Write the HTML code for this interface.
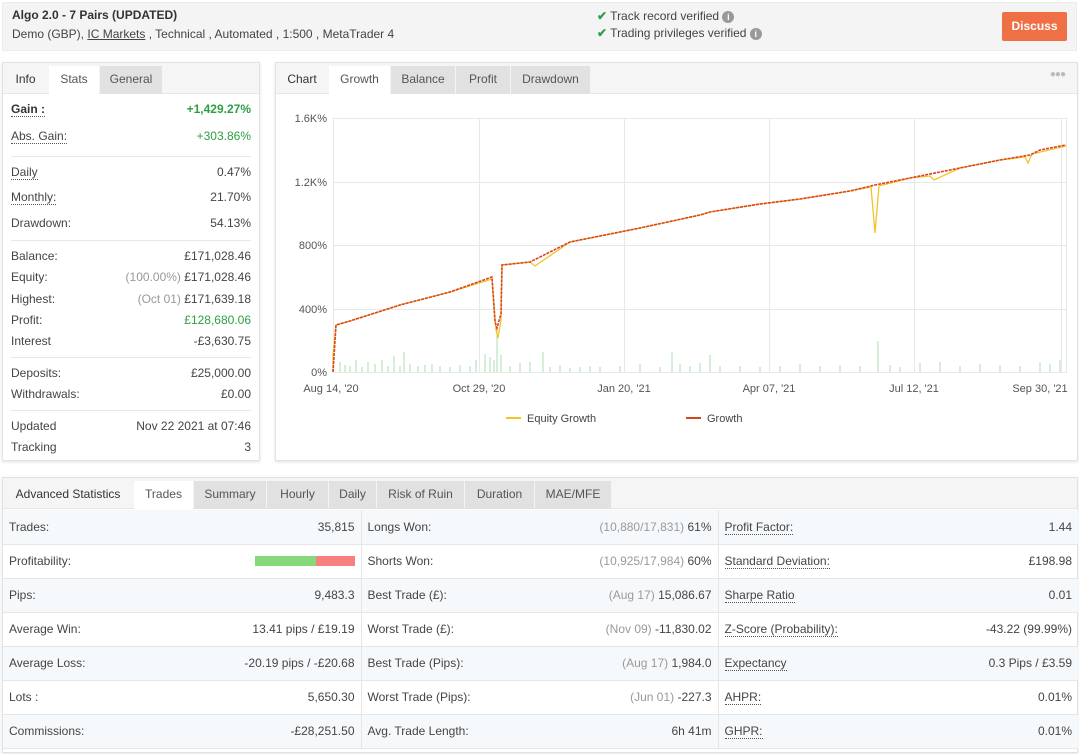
<!DOCTYPE html>
<html><head><style>
*{box-sizing:border-box;margin:0;padding:0}
body{width:1079px;height:754px;background:#fff;font-family:"Liberation Sans",sans-serif;font-size:12px;color:#444;position:relative;overflow:hidden}
.abs{position:absolute}
.box{position:absolute;border:1px solid #e3e3e3;background:#fff;box-shadow:0 1px 3px rgba(0,0,0,.12)}
.tabs{position:absolute;left:0;right:0;top:0;height:31px;background:#f5f5f5;border-bottom:1px solid #e6e6e6}
.tab{position:absolute;top:3px;height:28px;line-height:26px;text-align:center;background:#e1e1e1;color:#555}
.tab.on{background:#fff}
.tab.t{background:none;color:#333}
.row{position:absolute;left:8px;right:8px;height:21px;line-height:21px}
.row .r{position:absolute;right:0;top:0}
.u{border-bottom:1px dotted #555}
.g{color:#2e9e45}
.gr{color:#999}
.sep{position:absolute;left:8px;right:8px;height:1px;background:#e8e8e8}
table{border-collapse:collapse;position:absolute;left:0;top:32px;width:1075px}
td{height:34px;border-bottom:1px solid #e6e6e6;padding:0 6px;white-space:nowrap}
tr:nth-child(odd) td{background:#f6f9fc}
td.b{border-right:1px solid #e6e6e6}
</style></head><body>
<div class="abs" style="left:2px;top:2px;width:1075px;height:49px;background:#f4f4f4;border:1px solid #ececec"></div>
<div class="abs" style="left:12px;top:8px;font-weight:bold;color:#333">Algo 2.0 - 7 Pairs (UPDATED)</div>
<div class="abs" style="left:12px;top:27px;color:#444">Demo (GBP), <span style="text-decoration:underline">IC Markets</span> , Technical , Automated , 1:500 , MetaTrader 4</div>
<div class="abs" style="left:597px;top:9px;color:#444"><span style="color:#2e9e45;font-weight:bold">✔</span> Track record verified <span style="display:inline-block;width:12px;height:12px;border-radius:6px;background:#999;color:#fff;font-size:9px;text-align:center;line-height:12px;font-weight:bold">i</span></div>
<div class="abs" style="left:597px;top:26px;color:#444"><span style="color:#2e9e45;font-weight:bold">✔</span> Trading privileges verified <span style="display:inline-block;width:12px;height:12px;border-radius:6px;background:#999;color:#fff;font-size:9px;text-align:center;line-height:12px;font-weight:bold">i</span></div>
<div class="abs" style="left:1002px;top:12px;width:65px;height:29px;background:#ef7045;border-radius:2px;color:#fff;line-height:29px;text-align:center;font-weight:bold">Discuss</div>

<div class="box" style="left:2px;top:62px;width:258px;height:399px">
<div class="tabs"><div class="tab t" style="left:0;width:45px">Info</div><div class="tab on" style="left:46px;width:50px">Stats</div><div class="tab" style="left:97px;width:62px">General</div></div>
<div class="row" style="top:36px"><b class="u" style="color:#333">Gain :</b><span class="r g" style="font-weight:bold">+1,429.27%</span></div>
<div class="row" style="top:63px"><span class="u">Abs. Gain:</span><span class="r g">+303.86%</span></div>
<div class="sep" style="top:93px"></div>
<div class="row" style="top:99px"><span class="u">Daily</span><span class="r">0.47%</span></div>
<div class="row" style="top:124px"><span class="u">Monthly:</span><span class="r">21.70%</span></div>
<div class="row" style="top:150px">Drawdown:<span class="r">54.13%</span></div>
<div class="sep" style="top:177px"></div>
<div class="row" style="top:183px">Balance:<span class="r">£171,028.46</span></div>
<div class="row" style="top:204px">Equity:<span class="r"><span class="gr">(100.00%)</span> £171,028.46</span></div>
<div class="row" style="top:226px">Highest:<span class="r"><span class="gr">(Oct 01)</span> £171,639.18</span></div>
<div class="row" style="top:247px">Profit:<span class="r g">£128,680.06</span></div>
<div class="row" style="top:268px">Interest<span class="r">-£3,630.75</span></div>
<div class="sep" style="top:294px"></div>
<div class="row" style="top:300px">Deposits:<span class="r">£25,000.00</span></div>
<div class="row" style="top:321px">Withdrawals:<span class="r">£0.00</span></div>
<div class="sep" style="top:347px"></div>
<div class="row" style="top:353px">Updated<span class="r">Nov 22 2021 at 07:46</span></div>
<div class="row" style="top:374px">Tracking<span class="r">3</span></div>
</div>

<div class="box" style="left:275px;top:62px;width:803px;height:399px">
<div class="tabs"><div class="tab t" style="left:0;width:52px">Chart</div><div class="tab on" style="left:53px;width:61px">Growth</div><div class="tab" style="left:115px;width:64px">Balance</div><div class="tab" style="left:180px;width:54px">Profit</div><div class="tab" style="left:235px;width:79px">Drawdown</div>
<div class="abs" style="right:12px;top:6px;color:#bbb;font-size:10px;letter-spacing:-1px">●●●</div></div>
</div>
<svg class="abs" style="left:275px;top:95px" width="803" height="340" viewBox="275 95 803 340">
<g stroke="#e8e8e8" stroke-width="1">
<line x1="333" y1="118.5" x2="1066" y2="118.5"/><line x1="333" y1="182.5" x2="1066" y2="182.5"/><line x1="333" y1="245.5" x2="1066" y2="245.5"/><line x1="333" y1="309.5" x2="1066" y2="309.5"/><line x1="333" y1="372.5" x2="1066" y2="372.5"/>
<line x1="333.5" y1="118" x2="333.5" y2="373"/><line x1="479.5" y1="118" x2="479.5" y2="373"/><line x1="624.5" y1="118" x2="624.5" y2="373"/><line x1="769.5" y1="118" x2="769.5" y2="373"/><line x1="914.5" y1="118" x2="914.5" y2="373"/><line x1="1061.5" y1="118" x2="1061.5" y2="373"/><line x1="1066.5" y1="118" x2="1066.5" y2="373"/>
</g>
<g stroke="#a9dcb2" stroke-width="1">
<path d="M340 372V362M345 372V365M350 372V366M356 372V360M362 372V367M368 372V362M375 372V364M382 372V360M388 372V366M394 372V356M400 372V366M404 372V352M410 372V364M418 372V366M425 372V365M432 372V364M440 372V366M450 372V367M460 372V365M470 372V366M476 372V360M485 372V354M490 372V357M494 372V360M497 372V328M501 372V355M510 372V366M520 372V363M530 372V362M543 372V352M550 372V367M560 372V365M570 372V368M580 372V367M590 372V366M600 372V367M620 372V366M640 372V364M660 372V367M672 372V352M680 372V364M690 372V366M700 372V363M710 372V355M720 372V366M740 372V366M760 372V367M780 372V366M800 372V364M820 372V366M840 372V365M860 372V366M878 372V341M890 372V365M900 372V367M920 372V363M940 372V362M960 372V366M980 372V364M1000 372V365M1020 372V366M1040 372V362M1050 372V364M1060 372V360"/>
</g>
<path fill="none" stroke="#f3c328" stroke-width="1.3" d="M333 372L333 355L336 325L350 321L400 305L450 292L492 279L496 330L498 338L501 320L502 265L530 262L535 266L570 242L600 236L640 228L700 215L710 212L760 204L800 199L850 191L871 187L875 233L879 186L910 178L930 176L934 180L960 168L1000 160L1025 157L1028 163L1032 154L1066 146"/>
<path fill="none" stroke="#d9431f" stroke-width="1.6" stroke-dasharray="3 1" d="M333 372L336 325L350 321L400 305L450 292L492 277L495 322L497 328L501 314L502 265L530 262L570 242L600 236L640 228L700 215L710 212L760 204L800 199L850 191L875 185L910 178L960 168L1000 160L1030 155L1040 150L1066 145"/>
<g font-family="Liberation Sans" font-size="11" fill="#555" text-anchor="end">
<text x="327" y="122">1.6K%</text><text x="327" y="186">1.2K%</text><text x="327" y="249">800%</text><text x="327" y="313">400%</text><text x="327" y="376">0%</text>
</g>
<g font-family="Liberation Sans" font-size="11" fill="#555" text-anchor="middle">
<text x="331" y="392">Aug 14, '20</text><text x="479" y="392">Oct 29, '20</text><text x="624" y="392">Jan 20, '21</text><text x="769" y="392">Apr 07, '21</text><text x="914" y="392">Jul 12, '21</text><text x="1040" y="392">Sep 30, '21</text>
</g>
<line x1="506" y1="418" x2="521" y2="418" stroke="#f3c328" stroke-width="2"/>
<line x1="686" y1="418" x2="701" y2="418" stroke="#d9431f" stroke-width="2"/>
<text x="527" y="422" font-family="Liberation Sans" font-size="11" fill="#444">Equity Growth</text>
<text x="707" y="422" font-family="Liberation Sans" font-size="11" fill="#444">Growth</text>
</svg>

<div class="box" style="left:2px;top:477px;width:1076px;height:276px">
<div class="tabs"><div class="tab t" style="left:0;width:130px">Advanced Statistics</div><div class="tab on" style="left:131px;width:59px">Trades</div><div class="tab" style="left:191px;width:72px">Summary</div><div class="tab" style="left:264px;width:61px">Hourly</div><div class="tab" style="left:326px;width:47px">Daily</div><div class="tab" style="left:374px;width:87px">Risk of Ruin</div><div class="tab" style="left:462px;width:69px">Duration</div><div class="tab" style="left:532px;width:76px">MAE/MFE</div></div>
<table>
<colgroup><col style="width:358px"><col style="width:357px"><col style="width:360px"></colgroup>
<tr><td class="b"><span>Trades:</span><span style="float:right">35,815</span></td><td class="b">Longs Won:<span style="float:right"><span class="gr">(10,880/17,831)</span> 61%</span></td><td><span class="u">Profit Factor:</span><span style="float:right">1.44</span></td></tr>
<tr><td class="b">Profitability:<span style="float:right;margin-top:2px;display:inline-block;width:100px;height:10px;background:linear-gradient(90deg,#85d97a 61%,#f78080 61%)"></span></td><td class="b">Shorts Won:<span style="float:right"><span class="gr">(10,925/17,984)</span> 60%</span></td><td><span class="u">Standard Deviation:</span><span style="float:right">£198.98</span></td></tr>
<tr><td class="b">Pips:<span style="float:right">9,483.3</span></td><td class="b">Best Trade (£):<span style="float:right"><span class="gr">(Aug 17)</span> 15,086.67</span></td><td><span class="u">Sharpe Ratio</span><span style="float:right">0.01</span></td></tr>
<tr><td class="b">Average Win:<span style="float:right">13.41 pips / £19.19</span></td><td class="b">Worst Trade (£):<span style="float:right"><span class="gr">(Nov 09)</span> -11,830.02</span></td><td><span class="u">Z-Score (Probability):</span><span style="float:right">-43.22 (99.99%)</span></td></tr>
<tr><td class="b">Average Loss:<span style="float:right">-20.19 pips / -£20.68</span></td><td class="b">Best Trade (Pips):<span style="float:right"><span class="gr">(Aug 17)</span> 1,984.0</span></td><td><span class="u">Expectancy</span><span style="float:right">0.3 Pips / £3.59</span></td></tr>
<tr><td class="b">Lots :<span style="float:right">5,650.30</span></td><td class="b">Worst Trade (Pips):<span style="float:right"><span class="gr">(Jun 01)</span> -227.3</span></td><td><span class="u">AHPR:</span><span style="float:right">0.01%</span></td></tr>
<tr><td class="b">Commissions:<span style="float:right">-£28,251.50</span></td><td class="b">Avg. Trade Length:<span style="float:right">6h 41m</span></td><td><span class="u">GHPR:</span><span style="float:right">0.01%</span></td></tr>
</table>
</div>
</body></html>
